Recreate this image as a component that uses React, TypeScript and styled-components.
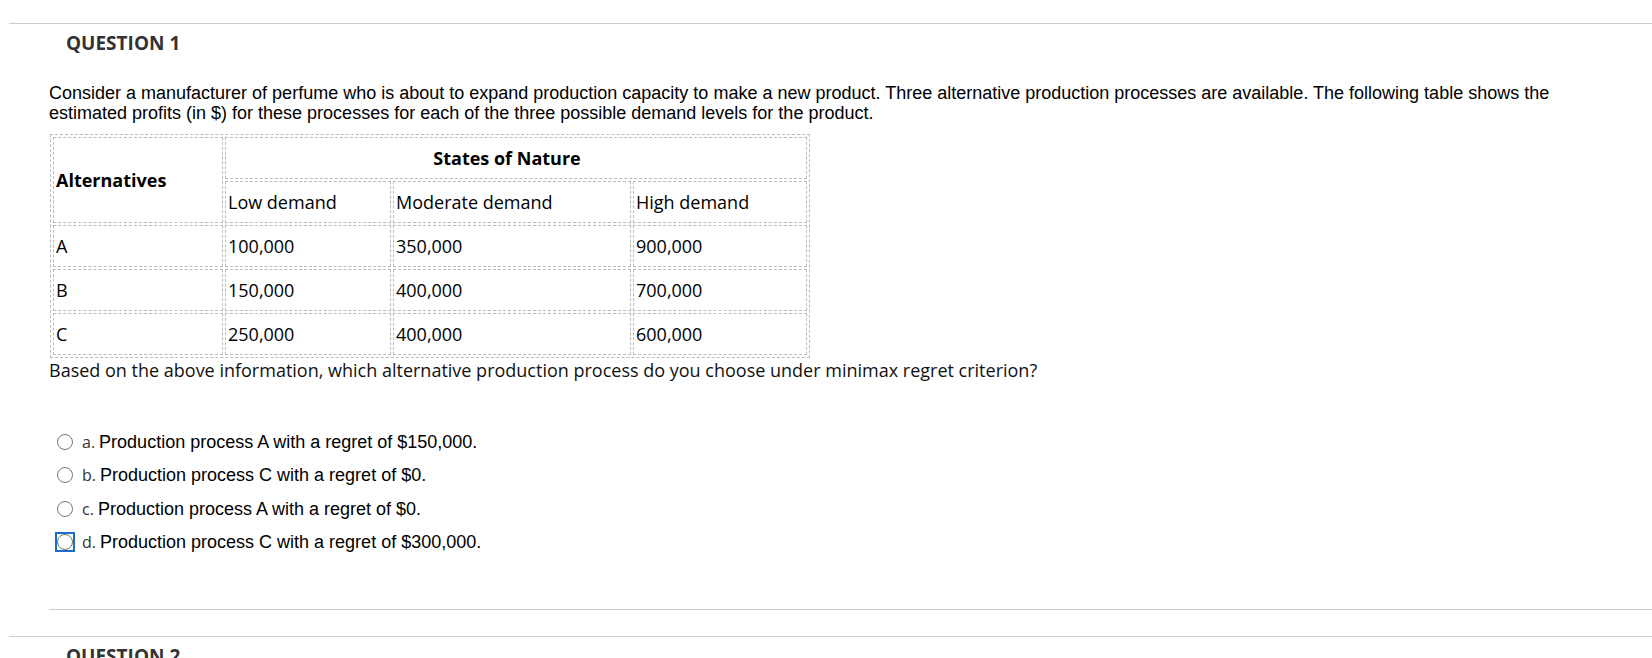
import styled, { createGlobalStyle } from "styled-components";

const GlobalStyle = createGlobalStyle`
    body {
        margin: 0;
        background: #fff;
    }
`;

const Page = styled.div`
    padding: 23px 0 0 9px;
`;
const QuestionBlock = styled.section<{ $gap?: number }>`
    border-top: 1px solid #cdcdcd;
    padding-top: 6px;
    margin-top: ${props => props.$gap || 0}px;
`;
const QuestionTitle = styled.h2`
    margin: 0 0 0 57px;
    font-family: "Open Sans", sans-serif;
    font-size: 19px;
    font-weight: 700;
    color: #333;
    line-height: normal;
`;
const QuestionBody = styled.div`
    margin: 27px 0 0 40px;
`;
const Prompt = styled.p`
    margin: 0;
    padding-right: 40px;
    font-family: "Liberation Sans", Arial, sans-serif;
    font-size: 18px;
    line-height: 20.4px;
    color: #000;
`;
const DataTable = styled.table`
    margin: 10px 0 0 1px;
    border: 1px dashed #bbb;
    border-spacing: 2px;
    table-layout: fixed;
    width: 760px;
    font-family: "Open Sans", sans-serif;
    font-size: 18px;
    color: #000;
`;
const Cell = styled.td<{ $bold?: boolean; $center?: boolean }>`
    box-sizing: border-box;
    height: 42px;
    padding: ${props => (props.$center ? "0 20px 0 2px" : "0 2px")};
    border: 1px dashed #bbb;
    vertical-align: middle;
    text-align: ${props => (props.$center ? "center" : "left")};
    font-weight: ${props => (props.$bold ? 700 : 400)};
    white-space: nowrap;
`;
const FollowUp = styled.p`
    margin: 0;
    font-family: "Open Sans", sans-serif;
    font-size: 18px;
    line-height: 24px;
    color: #111;
`;
const OptionList = styled.ul`
    list-style: none;
    margin: 43px 0 0;
    padding: 0 0 0 6px;
`;
const OptionRow = styled.li`
    display: flex;
    align-items: center;
    height: 33.5px;
`;
const RadioFrame = styled.span<{ $focused?: boolean }>`
    flex: none;
    display: flex;
    align-items: center;
    justify-content: center;
    width: 20px;
    height: 20px;
    box-sizing: border-box;
    border: 2px solid ${props => (props.$focused ? "#1a6ec8" : "transparent")};
`;
const Radio = styled.span`
    box-sizing: border-box;
    width: 16px;
    height: 16px;
    border: 1.5px solid #777;
    border-radius: 50%;
`;
const Label = styled.span`
    margin-left: 7px;
    font-family: "Liberation Sans", Arial, sans-serif;
    font-size: 18px;
    color: #000;
`;
const Letter = styled.span`
    margin-right: 4px;
    font-family: "Open Sans", sans-serif;
    font-size: 16px;
    color: #333;
`;
const Divider = styled.div`
    margin-top: 50px;
    border-top: 1px solid #cdcdcd;
`;

const rows = [
    { name: "A", values: ["100,000", "350,000", "900,000"] },
    { name: "B", values: ["150,000", "400,000", "700,000"] },
    { name: "C", values: ["250,000", "400,000", "600,000"] },
];

const options = [
    { letter: "a", text: "Production process A with a regret of $150,000." },
    { letter: "b", text: "Production process C with a regret of $0." },
    { letter: "c", text: "Production process A with a regret of $0." },
    { letter: "d", text: "Production process C with a regret of $300,000." },
];

const App = () => {
    return (
        <Page>
            <GlobalStyle />
            <QuestionBlock>
                <QuestionTitle>QUESTION 1</QuestionTitle>
                <QuestionBody>
                    <Prompt>
                        Consider a manufacturer of perfume who is about to expand production capacity to make a new
                        product. Three alternative production processes are available. The following table shows the
                        estimated profits (in $) for these processes for each of the three possible demand levels for the
                        product.
                    </Prompt>
                    <DataTable>
                        <colgroup>
                            <col style={{ width: 170 }} />
                            <col style={{ width: 166 }} />
                            <col style={{ width: 238 }} />
                            <col style={{ width: 174 }} />
                        </colgroup>
                        <tbody>
                            <tr>
                                <Cell rowSpan={2} $bold>Alternatives</Cell>
                                <Cell colSpan={3} $bold $center>States of Nature</Cell>
                            </tr>
                            <tr>
                                <Cell>Low demand</Cell>
                                <Cell>Moderate demand</Cell>
                                <Cell>High demand</Cell>
                            </tr>
                            {rows.map(row => (
                                <tr key={row.name}>
                                    <Cell>{row.name}</Cell>
                                    {row.values.map((value, index) => <Cell key={index}>{value}</Cell>)}
                                </tr>
                            ))}
                        </tbody>
                    </DataTable>
                    <FollowUp>
                        Based on the above information, which alternative production process do you choose under minimax
                        regret criterion?
                    </FollowUp>
                    <OptionList>
                        {options.map(option => (
                            <OptionRow key={option.letter}>
                                <RadioFrame $focused={option.letter === "d"}>
                                    <Radio />
                                </RadioFrame>
                                <Label>
                                    <Letter>{option.letter}.</Letter>
                                    {option.text}
                                </Label>
                            </OptionRow>
                        ))}
                    </OptionList>
                    <Divider />
                </QuestionBody>
            </QuestionBlock>
            <QuestionBlock $gap={26}>
                <QuestionTitle>QUESTION 2</QuestionTitle>
            </QuestionBlock>
        </Page>
    );
};
export default App;
